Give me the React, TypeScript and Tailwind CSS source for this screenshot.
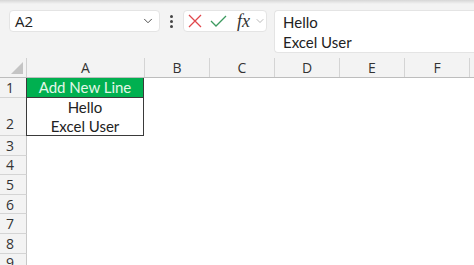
import { ChevronDown } from "lucide-react";

const cols = [
  { label: "A", w: 118 },
  { label: "B", w: 65 },
  { label: "C", w: 65 },
  { label: "D", w: 65 },
  { label: "E", w: 65 },
  { label: "F", w: 65 },
  { label: "", w: 65 },
];

const rowLabels = ["3", "4", "5", "6", "7", "8", "9"];

const headFont = { fontFamily: '"Open Sans", "Noto Sans", sans-serif' };
const cellFont = { fontFamily: 'Lato, "Liberation Sans", sans-serif' };

function Toolbar() {
  return (
    <div className="h-[58px] bg-[#f3f3f3] relative">
      <div className="absolute inset-x-0 top-0 h-[4px] bg-gradient-to-b from-[#d6d6d6] to-[#f3f3f3]" />
      <div className="flex items-start pt-[10px] pl-[9px]">
        {/* name box */}
        <div className="w-[151px] h-[22px] bg-white rounded-[4px] border border-[#e4e4e4] flex items-center justify-between pl-[5px] pr-[4px]">
          <span className="text-[15px] text-[#222]" style={headFont}>A2</span>
          <ChevronDown size={14} strokeWidth={1.6} className="text-[#444]" />
        </div>
        {/* dots */}
        <div className="w-[23px] h-[22px] flex flex-col items-center justify-center gap-[2px]">
          <span className="w-[3px] h-[3px] rounded-full bg-[#444]" />
          <span className="w-[3px] h-[3px] rounded-full bg-[#444]" />
          <span className="w-[3px] h-[3px] rounded-full bg-[#444]" />
        </div>
        {/* cancel / enter / fx */}
        <div className="w-[84px] h-[22px] bg-white rounded-[4px] border border-[#e4e4e4] flex items-center pl-[4px]">
          <svg width="14" height="14" viewBox="0 0 14 14" className="shrink-0">
            <path d="M1 1 L13 13 M13 1 L1 13" stroke="#e0474c" strokeWidth="1.3" fill="none" />
          </svg>
          <svg width="17" height="12" viewBox="0 0 17 12" className="shrink-0 ml-[8px]">
            <path d="M1 6 L6 11 L16 1" stroke="#3c9a5f" strokeWidth="1.3" fill="none" />
          </svg>
          <span
            className="ml-[10px] text-[18px] italic text-[#333] leading-none"
            style={{ fontFamily: '"Liberation Serif", serif' }}
          >
            fx
          </span>
          <ChevronDown size={12} strokeWidth={1.4} className="text-[#999] ml-[4px]" />
        </div>
        {/* formula input */}
        <div className="ml-[7px] flex-1 h-[43px] bg-white rounded-l-[4px] border border-r-0 border-[#e4e4e4] pl-[8px] pt-[1px]">
          <div className="text-[15px] leading-[20px] text-[#222]" style={cellFont}>Hello</div>
          <div className="text-[15px] leading-[20px] text-[#222]" style={cellFont}>Excel User</div>
        </div>
      </div>
    </div>
  );
}

function Grid() {
  return (
    <div className="bg-white">
      {/* column header */}
      <div className="flex h-[20px] bg-[#f3f3f3] border-b border-[#bdbdbd]">
        <div className="w-[27px] shrink-0 relative border-r border-[#d0d0d0]">
          <div
            className="absolute right-[3px] bottom-[3px] w-[12px] h-[12px] bg-[#c4c4c4]"
            style={{ clipPath: "polygon(100% 0, 100% 100%, 0 100%)" }}
          />
        </div>
        {cols.map((c, i) => (
          <div
            key={i}
            style={{ width: c.w, ...headFont }}
            className="shrink-0 border-r border-[#d4d4d4] flex items-center justify-center text-[14px] text-[#333]"
          >
            {c.label}
          </div>
        ))}
      </div>

      {/* rows 1 and 2 */}
      <div className="flex">
        <div className="w-[27px] shrink-0 bg-[#f3f3f3] border-r border-[#c8c8c8]" style={headFont}>
          <div className="h-[20px] border-b border-[#d4d4d4] flex items-center pl-[6px] text-[14px] text-[#333]">1</div>
          <div className="h-[38px] border-b border-[#d4d4d4] flex items-end pb-[1px] pl-[6px] text-[14px] text-[#333]">2</div>
        </div>
        <div className="w-[118px] shrink-0 border-x border-b border-[#3a3a3a] -ml-px" style={cellFont}>
          <div className="h-[20px] bg-[#00b050] border-b border-[#3a3a3a] flex items-center justify-center text-[15px] text-[#e3f7e8]">
            Add New Line
          </div>
          <div className="h-[37px] flex flex-col items-center justify-center text-[15px] leading-[19px] text-[#222]">
            <span>Hello</span>
            <span>Excel User</span>
          </div>
        </div>
      </div>

      {/* remaining rows */}
      {rowLabels.map((r) => (
        <div key={r} className="flex h-[19.6px]">
          <div
            className="w-[27px] shrink-0 bg-[#f3f3f3] border-r border-b border-[#d4d4d4] border-r-[#c8c8c8] flex items-center pl-[6px] text-[14px] text-[#333]"
            style={headFont}
          >
            {r}
          </div>
        </div>
      ))}
    </div>
  );
}

export default function App() {
  return (
    <div className="w-[474px] h-[265px] overflow-hidden bg-white">
      <Toolbar />
      <Grid />
    </div>
  );
}
